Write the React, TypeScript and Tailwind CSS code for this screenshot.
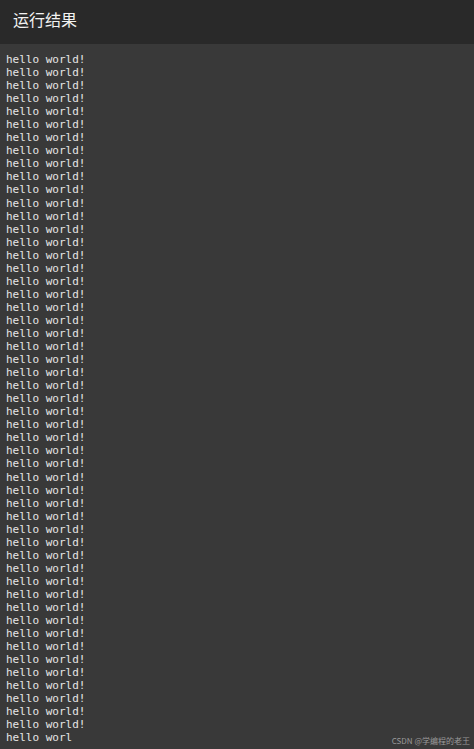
const lines = Array.from({ length: 52 }, () => 'hello world!');

export default function App() {
  return (
    <div className="w-[474px] h-[749px] overflow-hidden flex flex-col bg-[#393939] relative">
      <div className="h-[44px] shrink-0 bg-[#292929] flex items-center pl-[13px] pb-[6px]">
        <span className="text-[16px] text-[#f2f2f2] font-['Noto_Sans_CJK_SC',sans-serif]">运行结果</span>
      </div>
      <div className="pt-[9px] pl-[6px] font-['DejaVu_Sans_Mono',monospace] text-[11px] leading-[13.04px] text-[#e6e6e6] whitespace-pre">
        {lines.map((l, i) => (
          <div key={i}>{l}</div>
        ))}
        <div>hello worl</div>
      </div>
      <div className="absolute right-[4px] bottom-[2px] text-[8px] text-[#9a9a9a] font-['Noto_Sans_CJK_SC',sans-serif]">
        CSDN @学编程的老王
      </div>
    </div>
  );
}
